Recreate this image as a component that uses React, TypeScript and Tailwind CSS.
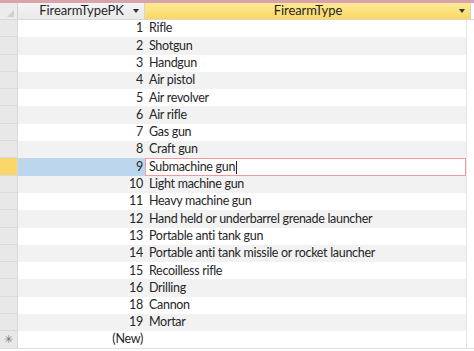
import React from "react";

const list: [number, string][] = [
  [1, "Rifle"],
  [2, "Shotgun"],
  [3, "Handgun"],
  [4, "Air pistol"],
  [5, "Air revolver"],
  [6, "Air rifle"],
  [7, "Gas gun"],
  [8, "Craft gun"],
  [9, "Submachine gun"],
  [10, "Light machine gun"],
  [11, "Heavy machine gun"],
  [12, "Hand held or underbarrel grenade launcher"],
  [13, "Portable anti tank gun"],
  [14, "Portable anti tank missile or rocket launcher"],
  [15, "Recoilless rifle"],
  [16, "Drilling"],
  [18, "Cannon"],
  [19, "Mortar"],
];

function Arrow() {
  return (
    <svg width="6" height="4" viewBox="0 0 6 4" className="shrink-0">
      <path d="M0 0 L6 0 L3 4 Z" fill="#333" />
    </svg>
  );
}

export default function App() {
  return (
    <div
      className="h-[351px] w-[474px] overflow-hidden bg-white text-[12.5px] tracking-[-0.3px] text-[#262626]"
      style={{ fontFamily: "Lato, 'Open Sans', sans-serif" }}
    >
      <div className="h-[3px] bg-[#d9a3ab]" />
      {/* header */}
      <div className="flex h-[17px] border-b border-[#d8d8d8] text-[13px] tracking-[-0.1px]">
        <div className="relative w-[18px] shrink-0 border-r border-[#d4d4d4] bg-[#ececec]">
          <svg width="7" height="7" viewBox="0 0 7 7" className="absolute bottom-[2px] right-[3px]">
            <path d="M7 0 L7 7 L0 7 Z" fill="#cfcfcf" />
          </svg>
        </div>
        <div className="flex w-[127px] shrink-0 items-center border-r border-[#d4d4d4] bg-gradient-to-b from-[#f4f4f4] to-[#e9e9e9] pl-[12px] pr-[5px]">
          <span className="flex-1 text-center">FirearmTypePK</span>
          <Arrow />
        </div>
        <div className="flex w-[326px] shrink-0 items-center border-r border-[#d4d4d4] bg-gradient-to-b from-[#fdea94] to-[#fbd862] pl-[12px] pr-[5px]">
          <span className="flex-1 text-center">FirearmType</span>
          <Arrow />
        </div>
      </div>
      {list.map(([id, name], i) => {
        const active = id === 9;
        const striped = i % 2 === 1;
        return (
          <div
            key={id}
            className={`flex h-[17.3px] ${striped ? "bg-[#f2f2f2]" : "bg-white"}`}
          >
            <div
              className={`w-[18px] shrink-0 border-b border-r border-[#d9d9d9] ${
                active ? "bg-[#fad66b]" : "bg-[#e8e8e8]"
              }`}
            />
            <div
              className={`flex w-[127px] shrink-0 items-center justify-end pr-[2px] leading-none ${
                active ? "bg-[#bcd6ee]" : ""
              }`}
            >
              {id}
            </div>
            {active ? (
              <div className="flex w-[321px] shrink-0 items-center border border-[#ee9aa0] bg-white pl-[3px] leading-none">
                {name}
                <span className="ml-px inline-block h-[13px] w-px bg-[#222]" />
              </div>
            ) : (
              <div className="flex w-[321px] shrink-0 items-center pl-[4px] leading-none">
                {name}
              </div>
            )}
            <div className="flex-1 border-l border-[#e6e6e6] bg-white" />
          </div>
        );
      })}
      <div className="flex h-[17.3px] border-b border-[#e0e0e0] bg-white">
        <div className="flex w-[18px] shrink-0 items-center justify-center border-r border-[#d9d9d9] bg-[#e8e8e8] text-[11px] text-[#777]">
          ✳
        </div>
        <div className="flex w-[127px] shrink-0 items-center justify-end pr-[2px] leading-none">
          (New)
        </div>
        <div className="w-[321px] shrink-0" />
        <div className="flex-1 border-l border-[#e6e6e6]" />
      </div>
    </div>
  );
}
